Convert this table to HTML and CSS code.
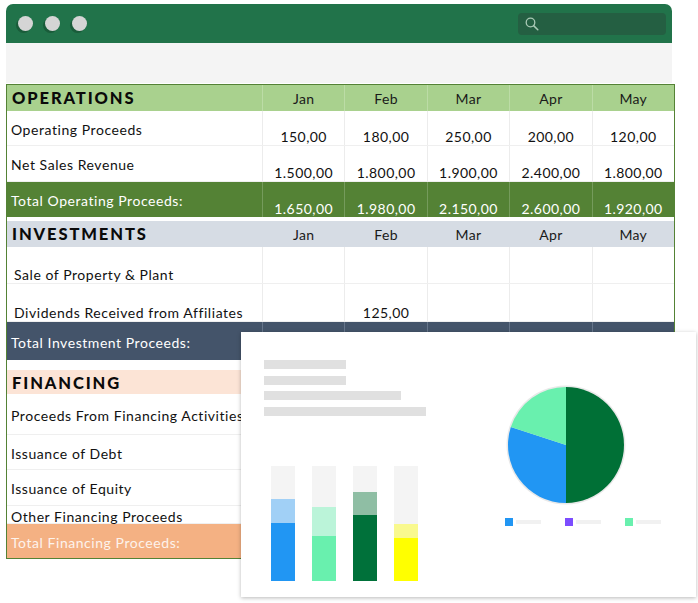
FILE: index.html
```html
<!DOCTYPE html>
<html>
<head>
<meta charset="utf-8">
<link rel="stylesheet" href="styles.css">
</head>
<body>
<div class="window">
  <div class="titlebar">
    <span class="dot"></span><span class="dot"></span><span class="dot"></span>
    <div class="search">
      <svg class="search-icon" width="14" height="14" viewBox="0 0 14 14"><circle cx="5.5" cy="5.5" r="4.3" fill="none" stroke="#a9c9b5" stroke-width="1.3"/><line x1="8.6" y1="8.6" x2="12.8" y2="12.8" stroke="#a9c9b5" stroke-width="1.5" stroke-linecap="round"/></svg>
    </div>
  </div>
  <div class="toolbar"></div>
</div>

<div class="sheet">
  <div class="row head op-head h26">
    <div class="c title">OPERATIONS</div><div class="c m">Jan</div><div class="c m">Feb</div><div class="c m">Mar</div><div class="c m">Apr</div><div class="c m">May</div>
  </div>
  <div class="row data h35">
    <div class="c lbl">Operating Proceeds</div><div class="c n">150,00</div><div class="c n">180,00</div><div class="c n">250,00</div><div class="c n">200,00</div><div class="c n">120,00</div>
  </div>
  <div class="row data h36">
    <div class="c lbl">Net Sales Revenue</div><div class="c n">1.500,00</div><div class="c n">1.800,00</div><div class="c n">1.900,00</div><div class="c n">2.400,00</div><div class="c n">1.800,00</div>
  </div>
  <div class="row total op-total h35">
    <div class="c lbl">Total Operating Proceeds:</div><div class="c n">1.650,00</div><div class="c n">1.980,00</div><div class="c n">2.150,00</div><div class="c n">2.600,00</div><div class="c n">1.920,00</div>
  </div>
  <div class="gap g4"></div>
  <div class="row head inv-head h26">
    <div class="c title">INVESTMENTS</div><div class="c m">Jan</div><div class="c m">Feb</div><div class="c m">Mar</div><div class="c m">Apr</div><div class="c m">May</div>
  </div>
  <div class="row data h37">
    <div class="c lbl low indent">Sale of Property &amp; Plant</div><div class="c n"></div><div class="c n"></div><div class="c n"></div><div class="c n"></div><div class="c n"></div>
  </div>
  <div class="row data h38">
    <div class="c lbl low indent">Dividends Received from Affiliates</div><div class="c n"></div><div class="c n">125,00</div><div class="c n"></div><div class="c n"></div><div class="c n"></div>
  </div>
  <div class="row total inv-total h38">
    <div class="c lbl">Total Investment Proceeds:</div><div class="c n"></div><div class="c n"></div><div class="c n"></div><div class="c n"></div><div class="c n"></div>
  </div>
  <div class="gap g10"></div>
  <div class="row head fin-head h24">
    <div class="c title low">FINANCING</div><div class="c m"></div><div class="c m"></div><div class="c m"></div><div class="c m"></div><div class="c m"></div>
  </div>
  <div class="row data h41">
    <div class="c lbl">Proceeds From Financing Activities</div><div class="c n"></div><div class="c n"></div><div class="c n"></div><div class="c n"></div><div class="c n"></div>
  </div>
  <div class="row data h35">
    <div class="c lbl">Issuance of Debt</div><div class="c n"></div><div class="c n"></div><div class="c n"></div><div class="c n"></div><div class="c n"></div>
  </div>
  <div class="row data h36">
    <div class="c lbl">Issuance of Equity</div><div class="c n"></div><div class="c n"></div><div class="c n"></div><div class="c n"></div><div class="c n"></div>
  </div>
  <div class="row data h18">
    <div class="c lbl">Other Financing Proceeds</div><div class="c n"></div><div class="c n"></div><div class="c n"></div><div class="c n"></div><div class="c n"></div>
  </div>
  <div class="row total fin-total h34">
    <div class="c lbl">Total Financing Proceeds:</div><div class="c n"></div><div class="c n"></div><div class="c n"></div><div class="c n"></div><div class="c n"></div>
  </div>
</div>

<div class="card">
  <div class="card-left">
    <div class="lines">
      <span class="ln w82"></span>
      <span class="ln w82"></span>
      <span class="ln w137"></span>
      <span class="ln w162"></span>
    </div>
    <div class="bars">
      <div class="bar">
        <span class="seg light blue-l" style="height:24px"></span>
        <span class="seg blue" style="height:58px"></span>
      </div>
      <div class="bar">
        <span class="seg light mint-l" style="height:29px"></span>
        <span class="seg mint" style="height:45px"></span>
      </div>
      <div class="bar">
        <span class="seg light green-l" style="height:23px"></span>
        <span class="seg green" style="height:66px"></span>
      </div>
      <div class="bar">
        <span class="seg light yellow-l" style="height:14px"></span>
        <span class="seg yellow" style="height:43px"></span>
      </div>
    </div>
  </div>
  <div class="card-right">
    <svg class="pie" width="120" height="120" viewBox="0 0 120 120">
      <circle cx="60" cy="60" r="59.5" fill="#e9e9e9"/>
      <path d="M60 60 L60 2 A58 58 0 0 1 60 118 Z" fill="#007036"/>
      <path d="M60 60 L60 118 A58 58 0 0 1 4.84 42.08 Z" fill="#2196f3"/>
      <path d="M60 60 L4.84 42.08 A58 58 0 0 1 60 2 Z" fill="#69f0ae"/>
    </svg>
    <div class="legend">
      <div class="lg"><span class="sw sw-blue"></span><span class="lgl"></span></div>
      <div class="lg"><span class="sw sw-purple"></span><span class="lgl"></span></div>
      <div class="lg"><span class="sw sw-mint"></span><span class="lgl"></span></div>
    </div>
  </div>
</div>
</body>
</html>
```

FILE: styles.css
```css
* { box-sizing: border-box; }
html, body { margin: 0; padding: 0; background: #ffffff; }
body {
  position: relative;
  width: 698px;
  height: 603px;
  overflow: hidden;
  font-family: "Lato", "Liberation Sans", sans-serif;
  color: #111;
}

/* window chrome */
.window { margin: 4px 0 0 6px; width: 666px; }
.titlebar {
  height: 39px;
  background: #21734a;
  border-radius: 7px 7px 0 0;
  display: flex;
  align-items: center;
  padding: 0 6px 0 11px;
  gap: 11px;
}
.dot {
  width: 15px;
  height: 15px;
  border-radius: 50%;
  background: #d5d5d5;
  box-shadow: -2px 2px 0 #1a5c3a;
  flex: none;
  margin-left: 1px;
}
.search {
  margin-left: auto;
  width: 148px;
  height: 22px;
  background: #245f42;
  border-radius: 4px;
  display: flex;
  align-items: center;
  padding-left: 7px;
}
.toolbar { height: 40px; background: #f4f4f4; }

/* sheet */
.sheet {
  margin: 1px 0 0 6px;
  width: 669px;
  border: 1px solid #548235;
  background: #fff;
}
.row {
  display: grid;
  grid-template-columns: 255px repeat(5, 1fr);
}
.h18 { height: 18px; } .h24 { height: 24px; } .h26 { height: 26px; }
.h34 { height: 34px; } .h35 { height: 35px; } .h36 { height: 36px; }
.h37 { height: 37px; } .h38 { height: 38px; } .h41 { height: 41px; }
.gap { background: #fff; }
.g4 { height: 4px; } .g10 { height: 10px; }

.c {
  display: flex;
  align-items: center;
  min-width: 0;
  white-space: nowrap;
  border-left: 1px solid #ececec;
}
.c:first-child { border-left: none; }
.data { border-bottom: 1px solid #efefef; }

.title {
  padding-left: 5px;
  font-weight: 900;
  font-size: 16.5px;
  letter-spacing: 1.9px;
  color: #0a0a0a;
}
.title.low { align-items: flex-end; padding-bottom: 1px; }
.m {
  justify-content: center;
  font-size: 14px;
  letter-spacing: 0.3px;
  color: #1a1a1a;
}
.lbl {
  padding-left: 4px;
  padding-top: 2px;
  font-size: 14px;
  letter-spacing: 0.55px;
  overflow: visible;
}
.lbl.low { align-items: flex-end; padding-bottom: 0; }
.lbl.indent { padding-left: 7px; }
.n {
  justify-content: center;
  align-items: flex-end;
  font-size: 14px;
  line-height: 17px;
  letter-spacing: 0.45px;
}

.op-head { background: #a9d18e; }
.op-head .c { border-left-color: #bcdca6; }
.inv-head { background: #d6dce4; }
.inv-head .c { border-left-color: #d6dce4; }
.fin-head { background: #fce4d6; }
.fin-head .c { border-left-color: #fce4d6; }

.total { color: #ffffff; }
.op-total { background: #548235; }
.op-total .c { border-left-color: #759b5c; }
.inv-total { background: #44546a; }
.inv-total .c { border-left-color: #66758a; }
.fin-total { background: #f4b183; color: #fdf3ec; }
.fin-total .c { border-left-color: #f4b183; }

/* chart card (overlay) */
.card {
  position: absolute;
  left: 241px;
  top: 332px;
  width: 455px;
  height: 265px;
  background: #fff;
  box-shadow: 0 1px 4px rgba(0, 0, 0, 0.28);
  display: flex;
  padding: 28px 0 0 23px;
}
.card-left { width: 241px; display: flex; flex-direction: column; }
.lines { display: flex; flex-direction: column; gap: 6.7px; }
.ln { display: block; height: 9px; background: #e0e0e0; }
.w82 { width: 82px; } .w137 { width: 137px; } .w162 { width: 162px; }
.bars {
  margin-top: 50px;
  padding-left: 7px;
  display: flex;
  gap: 16.6px;
}
.bar {
  width: 24.4px;
  height: 115px;
  background: #f4f4f4;
  display: flex;
  flex-direction: column;
  justify-content: flex-end;
}
.seg { display: block; width: 100%; }
.blue-l { background: #a1d0f6; } .blue { background: #2196f3; }
.mint-l { background: #bbf4d9; } .mint { background: #69f0ae; }
.green-l { background: #8fbea4; } .green { background: #00713a; }
.yellow-l { background: #f9f98e; } .yellow { background: #ffff00; }

.card-right { display: flex; flex-direction: column; padding-top: 25px; }
.pie { display: block; margin-left: 0.5px; }
.legend { display: flex; margin-top: 13px; }
.lg { width: 60px; display: flex; align-items: center; gap: 3px; }
.sw { display: block; width: 8px; height: 8px; }
.sw-blue { background: #2196f3; }
.sw-purple { background: #7c4dff; }
.sw-mint { background: #69f0ae; }
.lgl { display: block; width: 25px; height: 4px; background: #f1f1f1; }
```
